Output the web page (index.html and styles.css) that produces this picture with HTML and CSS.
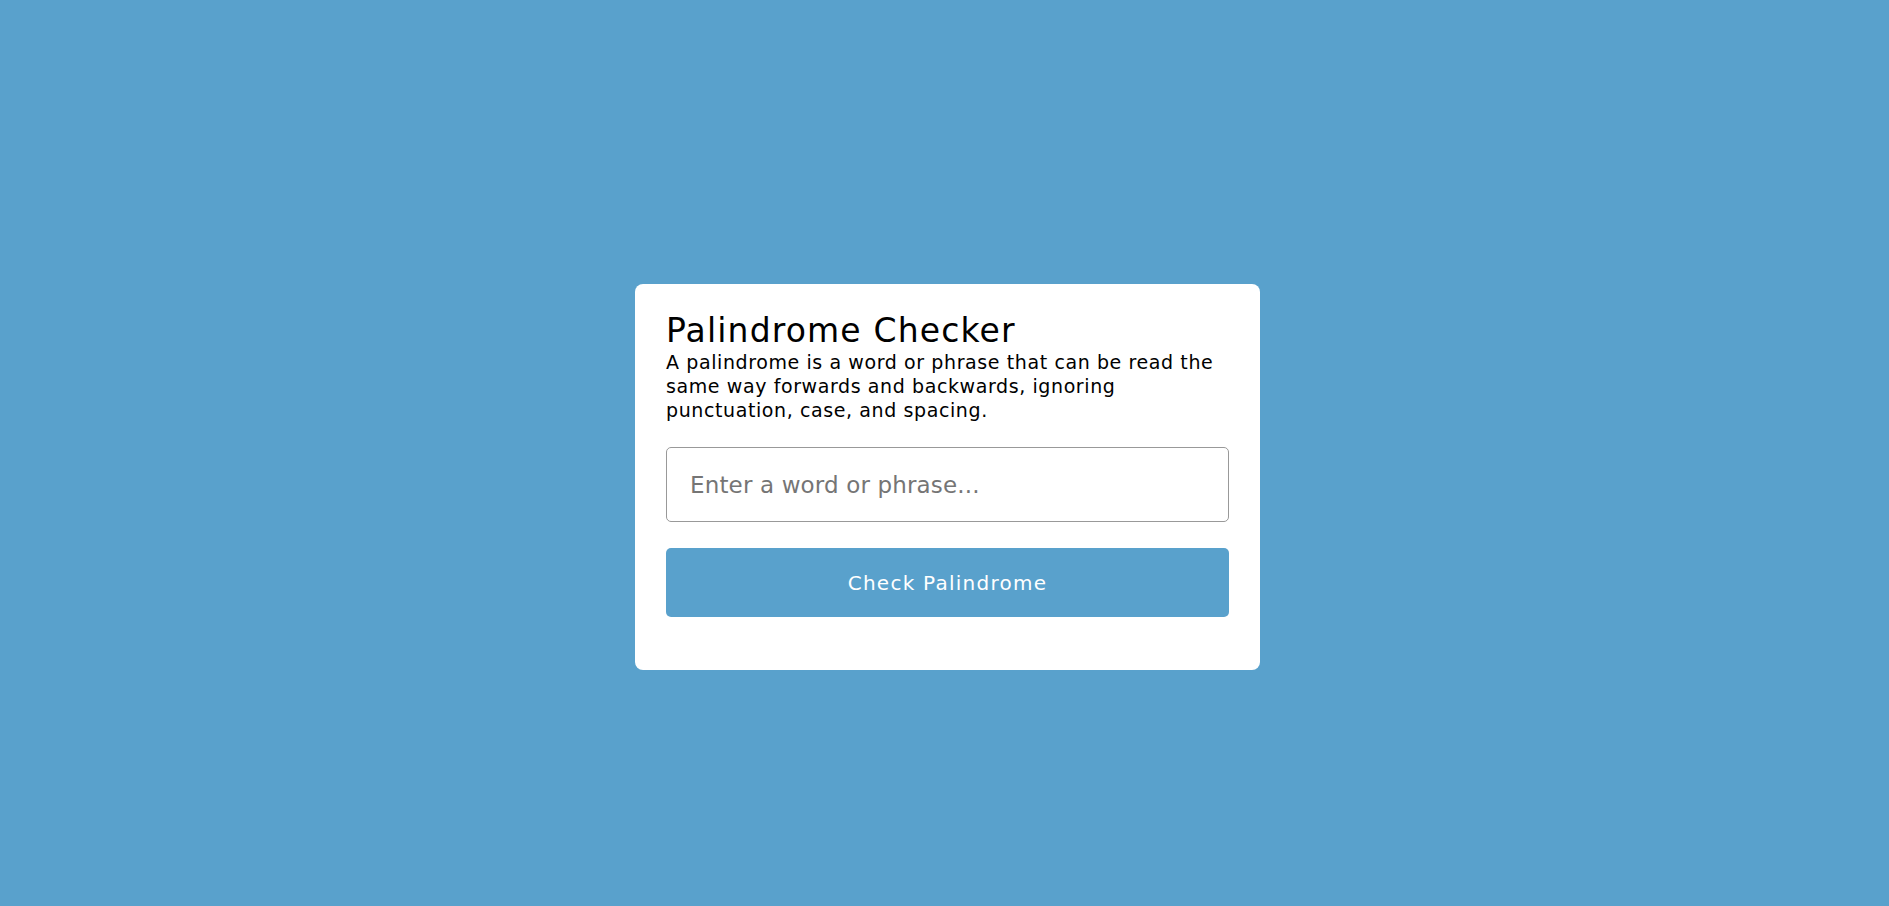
FILE: index.html
```html
<!DOCTYPE html>
<html>
<head lang="en">
    <meta charset="UTF-8">
    <title>Palindrome Checker</title>
    <link rel="stylesheet" href="styles.css">
</head>
<body>
<div class="container">
    <div class="card">
        <h1 class="title">Palindrome Checker</h1>
        <p class="intro">A palindrome is a word or phrase that can be read the same way forwards and backwards, ignoring punctuation, case, and spacing.</p>
        <input class="word_input" type="text" placeholder="Enter a word or phrase...">
        <button class="check_btn" type="button">Check Palindrome</button>
        <div class="result"></div>
    </div>
</div>
</body>
</html>
```

FILE: styles.css
```css
body {
    margin: 0;
    background: #59a1cc;
    font-family: "DejaVu Sans", sans-serif;
    color: #000;
}
.container {
    min-height: 100vh;
    box-sizing: border-box;
    padding: 48px 0 0 6px;
    display: flex;
    align-items: center;
    justify-content: center;
}
.card {
    width: 625px;
    box-sizing: border-box;
    padding: 27px 31px 53px;
    background: #fff;
    border-radius: 8px;
}
.title {
    margin: 0;
    font-size: 33px;
    font-weight: 400;
    line-height: 39px;
    letter-spacing: 1.15px;
}
.intro {
    margin: 0 0 25px;
    font-size: 19px;
    line-height: 24px;
    letter-spacing: 0.6px;
}
.word_input {
    display: block;
    width: 100%;
    height: 75px;
    box-sizing: border-box;
    padding: 0 23px;
    border: 1px solid #999;
    border-radius: 5px;
    font-family: inherit;
    font-size: 23px;
    letter-spacing: 0.15px;
    color: #000;
    outline: none;
}
.word_input::placeholder {
    color: #757575;
}
.check_btn {
    display: block;
    width: 100%;
    height: 69px;
    margin-top: 26px;
    border: none;
    border-radius: 5px;
    background: #59a1cc;
    color: #fff;
    font-family: inherit;
    font-size: 20px;
    letter-spacing: 1.25px;
    cursor: pointer;
}
```
